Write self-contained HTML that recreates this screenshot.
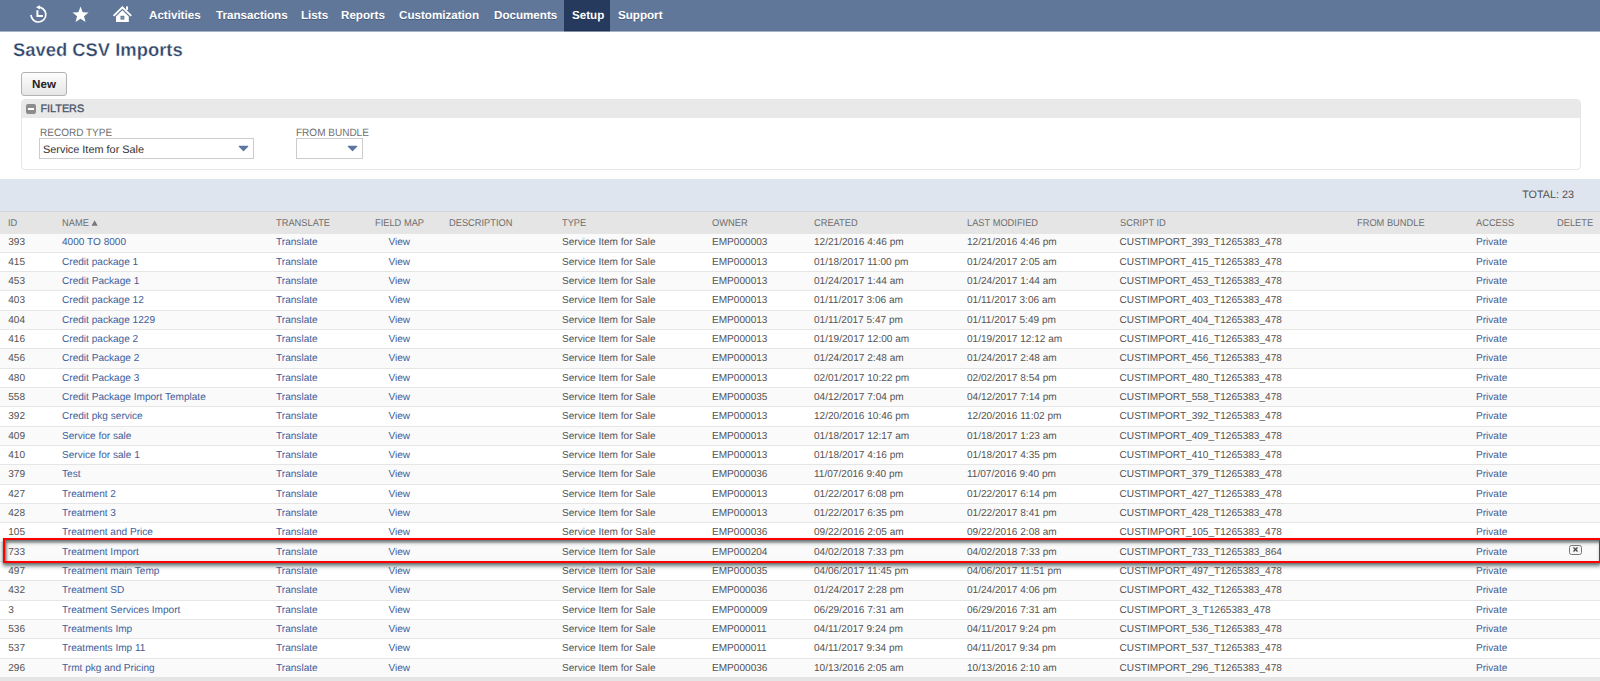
<!DOCTYPE html>
<html><head><meta charset="utf-8"><title>Saved CSV Imports</title>
<style>
*{box-sizing:border-box}
html,body{margin:0;padding:0}
body{width:1600px;height:681px;overflow:hidden;background:#fff;font-family:"Liberation Sans",Arial,sans-serif;position:relative;color:#444;text-rendering:geometricPrecision}
.nav{position:absolute;left:0;top:0;width:1600px;height:32px;background:#607799;border-bottom:1px solid #a6b3c6}
.nav span.t{position:absolute;top:9px;text-shadow:0 1px 0 rgba(25,40,75,.35);font-size:11.62px;font-weight:bold;color:#fff;line-height:13px;white-space:nowrap}
.nav .sel{position:absolute;left:564px;top:0;width:46px;height:32px;background:#263a5e;border-bottom:1px solid #848fa3;box-shadow:inset 0 -1px 0 #1f3256}
.nav svg{position:absolute}
h1{position:absolute;left:13px;top:39px;margin:0;font-size:18.4px;line-height:22px;font-weight:bold;color:#2f4669;-webkit-text-stroke:0.3px #fff;white-space:nowrap}
.btn{position:absolute;left:21px;top:72px;width:46px;height:24px;border:1px solid #b2b2b2;border-radius:3px;background:linear-gradient(#fdfdfd,#e6e6e6);font-size:11.6px;font-weight:bold;color:#222;text-align:center;line-height:23px}
.panel{position:absolute;left:21px;top:99px;width:1560px;height:71px;border:1px solid #e6e6e6;border-radius:4px;background:#fff;overflow:hidden}
.panel .hd{position:absolute;left:0;top:0;right:0;height:18px;background:#e9e9e9}
.panel .ic{position:absolute;left:4px;top:4px;width:10px;height:10px;border-radius:2px;background:#8c8c8c}
.panel .ic i{position:absolute;left:2px;top:4px;width:6px;height:2px;background:#fff}
.panel .ft{position:absolute;left:18.500px;top:3px;font-size:10.8px;line-height:13px;color:#4b566a;-webkit-text-stroke:0.35px #4b566a}
.lbl{position:absolute;font-size:10.6px;line-height:12px;color:#6f6f6f;white-space:nowrap;transform:scaleX(.945);transform-origin:0 0}
.sel1{position:absolute;border:1px solid #ccc;background:#fff;font-size:10.9px;line-height:22px;color:#333;padding-left:3px;white-space:nowrap}
.sel1 svg{position:absolute;right:4px;top:6px}
.bar{position:absolute;left:0;top:179px;width:1600px;height:32px;background:#dfe5ef}
.total{position:absolute;right:26px;top:189px;font-size:10.8px;line-height:12px;color:#505050;white-space:nowrap}
.thead{position:absolute;left:0;top:211px;width:1600px;height:22px;background:#e5e5e5;border-top:1px solid #d4d8de}
.thead span{position:absolute;top:6.250px;font-size:9.84px;line-height:11px;color:#6e6e6e;white-space:nowrap;transform:scaleX(.945);transform-origin:0 0}
.r{position:absolute;left:0;width:1600px;background:#fff;box-shadow:inset 0 1px 0 #e6e6e6}
.r.o{background:#fafafa}
.r .rt{position:absolute;left:0;width:1600px;height:12px}
.r span{position:absolute;top:0;font-size:10.08px;line-height:12px;color:#545454;white-space:nowrap}
.r span.l{color:#42609a}
.foot{position:absolute;left:0;top:677px;width:1600px;height:4px;background:#e5e5e5}
.hl{position:absolute;left:2.800px;top:537.500px;width:1598.400px;height:25.300px;border:2.500px solid #f00;box-shadow:0 2.5px 4px rgba(85,100,100,.85), 0 1px 1.5px rgba(85,100,100,.4), inset 1.5px 2.5px 3.5px rgba(85,100,100,.85), inset 1px 1px 1.5px rgba(85,100,100,.4)}
.del{position:absolute;left:1569px;top:545px;width:13px;height:10px;border:1px solid #777;border-radius:2.500px;background:#f6f6f6}
</style></head><body>

<div class="nav"><div class="sel"></div>
<svg style="left:0;top:0" width="140" height="31" viewBox="0 0 140 31"><path d="M31.00 14.86A7.4 7.4 0 1 0 37.76 7.23" fill="none" stroke="#fff" stroke-width="1.700"/><path d="M39.900 5.200L36 7.350l3.900 2.200z" fill="#fff"/><path d="M37.400 10.300v5.800h5.500" fill="none" stroke="#fff" stroke-width="2"/><path d="M80.550 6.600l2.150 5.600 5.900.3-4.600 3.700 1.550 5.800-5-3.300-5 3.300 1.550-5.800-4.600-3.700 5.900-.3z" fill="#fff"/><path d="M113.600 15.900L122.400 7.400l8.800 8.500" fill="none" stroke="#fff" stroke-width="1.900"/><path d="M116 16.500l6.400-6.200 6.400 6.200V22.100H116z" fill="#fff"/><rect x="120.500" y="15.800" width="3.800" height="3.800" fill="#607799"/><rect x="121.600" y="16.900" width="1.600" height="1.600" fill="#fff" opacity=".35"/><rect x="126.100" y="6.400" width="1.900" height="3.500" fill="#fff"/></svg>
<span class="t" style="left:149px">Activities</span>
<span class="t" style="left:216px">Transactions</span>
<span class="t" style="left:301px">Lists</span>
<span class="t" style="left:341px">Reports</span>
<span class="t" style="left:399px">Customization</span>
<span class="t" style="left:494px">Documents</span>
<span class="t" style="left:572px">Setup</span>
<span class="t" style="left:618px">Support</span>
</div>
<h1>Saved CSV Imports</h1>
<div class="btn">New</div>
<div class="panel"><div class="hd"></div><div class="ic"><i></i></div><div class="ft">FILTERS</div></div>
<div class="lbl" style="left:39.500px;top:127px">RECORD TYPE</div>
<div class="sel1" style="left:39px;top:138px;width:215px;height:21px">Service Item for Sale<svg width="11" height="7" viewBox="0 0 11 7"><path d="M1.300 1.400h8.400L5.500 5.500z" fill="#5b769f" stroke="#5b769f" stroke-width="1.200" stroke-linejoin="round"/></svg></div>
<div class="lbl" style="left:295.800px;top:127px">FROM BUNDLE</div>
<div class="sel1" style="left:296px;top:138px;width:67px;height:21px"><svg width="11" height="7" viewBox="0 0 11 7"><path d="M1.300 1.400h8.400L5.500 5.500z" fill="#5b769f" stroke="#5b769f" stroke-width="1.200" stroke-linejoin="round"/></svg></div>
<div class="bar"></div><div class="total">TOTAL: 23</div>
<div class="thead">
<span style="left:8.4px">ID</span>
<span style="left:62px">NAME <svg width="7" height="6" viewBox="0 0 7 6" style="vertical-align:0px"><path d="M3.500 0.300L6.800 5.700H0.200z" fill="#777"/></svg></span>
<span style="left:276px">TRANSLATE</span>
<span style="left:375px">FIELD MAP</span>
<span style="left:449px">DESCRIPTION</span>
<span style="left:562px">TYPE</span>
<span style="left:712px">OWNER</span>
<span style="left:814px">CREATED</span>
<span style="left:967px">LAST MODIFIED</span>
<span style="left:1120px">SCRIPT ID</span>
<span style="left:1357px">FROM BUNDLE</span>
<span style="left:1476px">ACCESS</span>
<span style="left:1557px">DELETE</span>
</div>
<div class="r o" style="top:233px;height:19px"><div class="rt" style="top:4.40px"><span style="left:8.200px">393</span><span class="l" style="left:62px">4000 TO 8000</span><span class="l" style="left:276px">Translate</span><span class="l" style="left:388.400px">View</span><span style="left:562px">Service Item for Sale</span><span style="left:712px">EMP000003</span><span style="left:814px">12/21/2016 4:46 pm</span><span style="left:967px">12/21/2016 4:46 pm</span><span style="left:1119.600px">CUSTIMPORT_393_T1265383_478</span><span class="l" style="left:1476px">Private</span></div></div>
<div class="r" style="top:252px;height:19px"><div class="rt" style="top:4.72px"><span style="left:8.200px">415</span><span class="l" style="left:62px">Credit package 1</span><span class="l" style="left:276px">Translate</span><span class="l" style="left:388.400px">View</span><span style="left:562px">Service Item for Sale</span><span style="left:712px">EMP000013</span><span style="left:814px">01/18/2017 11:00 pm</span><span style="left:967px">01/24/2017 2:05 am</span><span style="left:1119.600px">CUSTIMPORT_415_T1265383_478</span><span class="l" style="left:1476px">Private</span></div></div>
<div class="r o" style="top:271px;height:19px"><div class="rt" style="top:5.05px"><span style="left:8.200px">453</span><span class="l" style="left:62px">Credit Package 1</span><span class="l" style="left:276px">Translate</span><span class="l" style="left:388.400px">View</span><span style="left:562px">Service Item for Sale</span><span style="left:712px">EMP000013</span><span style="left:814px">01/24/2017 1:44 am</span><span style="left:967px">01/24/2017 1:44 am</span><span style="left:1119.600px">CUSTIMPORT_453_T1265383_478</span><span class="l" style="left:1476px">Private</span></div></div>
<div class="r" style="top:290px;height:20px"><div class="rt" style="top:5.38px"><span style="left:8.200px">403</span><span class="l" style="left:62px">Credit package 12</span><span class="l" style="left:276px">Translate</span><span class="l" style="left:388.400px">View</span><span style="left:562px">Service Item for Sale</span><span style="left:712px">EMP000013</span><span style="left:814px">01/11/2017 3:06 am</span><span style="left:967px">01/11/2017 3:06 am</span><span style="left:1119.600px">CUSTIMPORT_403_T1265383_478</span><span class="l" style="left:1476px">Private</span></div></div>
<div class="r o" style="top:310px;height:19px"><div class="rt" style="top:4.70px"><span style="left:8.200px">404</span><span class="l" style="left:62px">Credit package 1229</span><span class="l" style="left:276px">Translate</span><span class="l" style="left:388.400px">View</span><span style="left:562px">Service Item for Sale</span><span style="left:712px">EMP000013</span><span style="left:814px">01/11/2017 5:47 pm</span><span style="left:967px">01/11/2017 5:49 pm</span><span style="left:1119.600px">CUSTIMPORT_404_T1265383_478</span><span class="l" style="left:1476px">Private</span></div></div>
<div class="r" style="top:329px;height:19px"><div class="rt" style="top:5.02px"><span style="left:8.200px">416</span><span class="l" style="left:62px">Credit package 2</span><span class="l" style="left:276px">Translate</span><span class="l" style="left:388.400px">View</span><span style="left:562px">Service Item for Sale</span><span style="left:712px">EMP000013</span><span style="left:814px">01/19/2017 12:00 am</span><span style="left:967px">01/19/2017 12:12 am</span><span style="left:1119.600px">CUSTIMPORT_416_T1265383_478</span><span class="l" style="left:1476px">Private</span></div></div>
<div class="r o" style="top:348px;height:20px"><div class="rt" style="top:5.35px"><span style="left:8.200px">456</span><span class="l" style="left:62px">Credit Package 2</span><span class="l" style="left:276px">Translate</span><span class="l" style="left:388.400px">View</span><span style="left:562px">Service Item for Sale</span><span style="left:712px">EMP000013</span><span style="left:814px">01/24/2017 2:48 am</span><span style="left:967px">01/24/2017 2:48 am</span><span style="left:1119.600px">CUSTIMPORT_456_T1265383_478</span><span class="l" style="left:1476px">Private</span></div></div>
<div class="r" style="top:368px;height:19px"><div class="rt" style="top:4.67px"><span style="left:8.200px">480</span><span class="l" style="left:62px">Credit Package 3</span><span class="l" style="left:276px">Translate</span><span class="l" style="left:388.400px">View</span><span style="left:562px">Service Item for Sale</span><span style="left:712px">EMP000013</span><span style="left:814px">02/01/2017 10:22 pm</span><span style="left:967px">02/02/2017 8:54 pm</span><span style="left:1119.600px">CUSTIMPORT_480_T1265383_478</span><span class="l" style="left:1476px">Private</span></div></div>
<div class="r o" style="top:387px;height:19px"><div class="rt" style="top:5.00px"><span style="left:8.200px">558</span><span class="l" style="left:62px">Credit Package Import Template</span><span class="l" style="left:276px">Translate</span><span class="l" style="left:388.400px">View</span><span style="left:562px">Service Item for Sale</span><span style="left:712px">EMP000035</span><span style="left:814px">04/12/2017 7:04 pm</span><span style="left:967px">04/12/2017 7:14 pm</span><span style="left:1119.600px">CUSTIMPORT_558_T1265383_478</span><span class="l" style="left:1476px">Private</span></div></div>
<div class="r" style="top:406px;height:20px"><div class="rt" style="top:5.32px"><span style="left:8.200px">392</span><span class="l" style="left:62px">Credit pkg service</span><span class="l" style="left:276px">Translate</span><span class="l" style="left:388.400px">View</span><span style="left:562px">Service Item for Sale</span><span style="left:712px">EMP000013</span><span style="left:814px">12/20/2016 10:46 pm</span><span style="left:967px">12/20/2016 11:02 pm</span><span style="left:1119.600px">CUSTIMPORT_392_T1265383_478</span><span class="l" style="left:1476px">Private</span></div></div>
<div class="r o" style="top:426px;height:19px"><div class="rt" style="top:4.65px"><span style="left:8.200px">409</span><span class="l" style="left:62px">Service for sale</span><span class="l" style="left:276px">Translate</span><span class="l" style="left:388.400px">View</span><span style="left:562px">Service Item for Sale</span><span style="left:712px">EMP000013</span><span style="left:814px">01/18/2017 12:17 am</span><span style="left:967px">01/18/2017 1:23 am</span><span style="left:1119.600px">CUSTIMPORT_409_T1265383_478</span><span class="l" style="left:1476px">Private</span></div></div>
<div class="r" style="top:445px;height:19px"><div class="rt" style="top:4.97px"><span style="left:8.200px">410</span><span class="l" style="left:62px">Service for sale 1</span><span class="l" style="left:276px">Translate</span><span class="l" style="left:388.400px">View</span><span style="left:562px">Service Item for Sale</span><span style="left:712px">EMP000013</span><span style="left:814px">01/18/2017 4:16 pm</span><span style="left:967px">01/18/2017 4:35 pm</span><span style="left:1119.600px">CUSTIMPORT_410_T1265383_478</span><span class="l" style="left:1476px">Private</span></div></div>
<div class="r o" style="top:464px;height:20px"><div class="rt" style="top:5.30px"><span style="left:8.200px">379</span><span class="l" style="left:62px">Test</span><span class="l" style="left:276px">Translate</span><span class="l" style="left:388.400px">View</span><span style="left:562px">Service Item for Sale</span><span style="left:712px">EMP000036</span><span style="left:814px">11/07/2016 9:40 pm</span><span style="left:967px">11/07/2016 9:40 pm</span><span style="left:1119.600px">CUSTIMPORT_379_T1265383_478</span><span class="l" style="left:1476px">Private</span></div></div>
<div class="r" style="top:484px;height:19px"><div class="rt" style="top:4.62px"><span style="left:8.200px">427</span><span class="l" style="left:62px">Treatment 2</span><span class="l" style="left:276px">Translate</span><span class="l" style="left:388.400px">View</span><span style="left:562px">Service Item for Sale</span><span style="left:712px">EMP000013</span><span style="left:814px">01/22/2017 6:08 pm</span><span style="left:967px">01/22/2017 6:14 pm</span><span style="left:1119.600px">CUSTIMPORT_427_T1265383_478</span><span class="l" style="left:1476px">Private</span></div></div>
<div class="r o" style="top:503px;height:19px"><div class="rt" style="top:4.95px"><span style="left:8.200px">428</span><span class="l" style="left:62px">Treatment 3</span><span class="l" style="left:276px">Translate</span><span class="l" style="left:388.400px">View</span><span style="left:562px">Service Item for Sale</span><span style="left:712px">EMP000013</span><span style="left:814px">01/22/2017 6:35 pm</span><span style="left:967px">01/22/2017 8:41 pm</span><span style="left:1119.600px">CUSTIMPORT_428_T1265383_478</span><span class="l" style="left:1476px">Private</span></div></div>
<div class="r" style="top:522px;height:20px"><div class="rt" style="top:5.27px"><span style="left:8.200px">105</span><span class="l" style="left:62px">Treatment and Price</span><span class="l" style="left:276px">Translate</span><span class="l" style="left:388.400px">View</span><span style="left:562px">Service Item for Sale</span><span style="left:712px">EMP000036</span><span style="left:814px">09/22/2016 2:05 am</span><span style="left:967px">09/22/2016 2:08 am</span><span style="left:1119.600px">CUSTIMPORT_105_T1265383_478</span><span class="l" style="left:1476px">Private</span></div></div>
<div class="r o" style="top:542px;height:19px"><div class="rt" style="top:4.60px"><span style="left:8.200px">733</span><span class="l" style="left:62px">Treatment Import</span><span class="l" style="left:276px">Translate</span><span class="l" style="left:388.400px">View</span><span style="left:562px">Service Item for Sale</span><span style="left:712px">EMP000204</span><span style="left:814px">04/02/2018 7:33 pm</span><span style="left:967px">04/02/2018 7:33 pm</span><span style="left:1119.600px">CUSTIMPORT_733_T1265383_864</span><span class="l" style="left:1476px">Private</span></div></div>
<div class="r" style="top:561px;height:19px"><div class="rt" style="top:4.92px"><span style="left:8.200px">497</span><span class="l" style="left:62px">Treatment main Temp</span><span class="l" style="left:276px">Translate</span><span class="l" style="left:388.400px">View</span><span style="left:562px">Service Item for Sale</span><span style="left:712px">EMP000035</span><span style="left:814px">04/06/2017 11:45 pm</span><span style="left:967px">04/06/2017 11:51 pm</span><span style="left:1119.600px">CUSTIMPORT_497_T1265383_478</span><span class="l" style="left:1476px">Private</span></div></div>
<div class="r o" style="top:580px;height:20px"><div class="rt" style="top:5.25px"><span style="left:8.200px">432</span><span class="l" style="left:62px">Treatment SD</span><span class="l" style="left:276px">Translate</span><span class="l" style="left:388.400px">View</span><span style="left:562px">Service Item for Sale</span><span style="left:712px">EMP000036</span><span style="left:814px">01/24/2017 2:28 pm</span><span style="left:967px">01/24/2017 4:06 pm</span><span style="left:1119.600px">CUSTIMPORT_432_T1265383_478</span><span class="l" style="left:1476px">Private</span></div></div>
<div class="r" style="top:600px;height:19px"><div class="rt" style="top:4.57px"><span style="left:8.200px">3</span><span class="l" style="left:62px">Treatment Services Import</span><span class="l" style="left:276px">Translate</span><span class="l" style="left:388.400px">View</span><span style="left:562px">Service Item for Sale</span><span style="left:712px">EMP000009</span><span style="left:814px">06/29/2016 7:31 am</span><span style="left:967px">06/29/2016 7:31 am</span><span style="left:1119.600px">CUSTIMPORT_3_T1265383_478</span><span class="l" style="left:1476px">Private</span></div></div>
<div class="r o" style="top:619px;height:19px"><div class="rt" style="top:4.90px"><span style="left:8.200px">536</span><span class="l" style="left:62px">Treatments Imp</span><span class="l" style="left:276px">Translate</span><span class="l" style="left:388.400px">View</span><span style="left:562px">Service Item for Sale</span><span style="left:712px">EMP000011</span><span style="left:814px">04/11/2017 9:24 pm</span><span style="left:967px">04/11/2017 9:24 pm</span><span style="left:1119.600px">CUSTIMPORT_536_T1265383_478</span><span class="l" style="left:1476px">Private</span></div></div>
<div class="r" style="top:638px;height:20px"><div class="rt" style="top:5.23px"><span style="left:8.200px">537</span><span class="l" style="left:62px">Treatments Imp 11</span><span class="l" style="left:276px">Translate</span><span class="l" style="left:388.400px">View</span><span style="left:562px">Service Item for Sale</span><span style="left:712px">EMP000011</span><span style="left:814px">04/11/2017 9:34 pm</span><span style="left:967px">04/11/2017 9:34 pm</span><span style="left:1119.600px">CUSTIMPORT_537_T1265383_478</span><span class="l" style="left:1476px">Private</span></div></div>
<div class="r o" style="top:658px;height:19px"><div class="rt" style="top:4.55px"><span style="left:8.200px">296</span><span class="l" style="left:62px">Trmt pkg and Pricing</span><span class="l" style="left:276px">Translate</span><span class="l" style="left:388.400px">View</span><span style="left:562px">Service Item for Sale</span><span style="left:712px">EMP000036</span><span style="left:814px">10/13/2016 2:05 am</span><span style="left:967px">10/13/2016 2:10 am</span><span style="left:1119.600px">CUSTIMPORT_296_T1265383_478</span><span class="l" style="left:1476px">Private</span></div></div>
<div class="foot"></div>
<div class="del"><svg width="11" height="7" viewBox="0 0 11 7" style="position:absolute;left:0;top:0"><path d="M3.500 1.500l4 4M7.500 1.500l-4 4" stroke="#444" stroke-width="1.300" fill="none"/></svg></div>
<div class="hl"></div>
</body></html>
